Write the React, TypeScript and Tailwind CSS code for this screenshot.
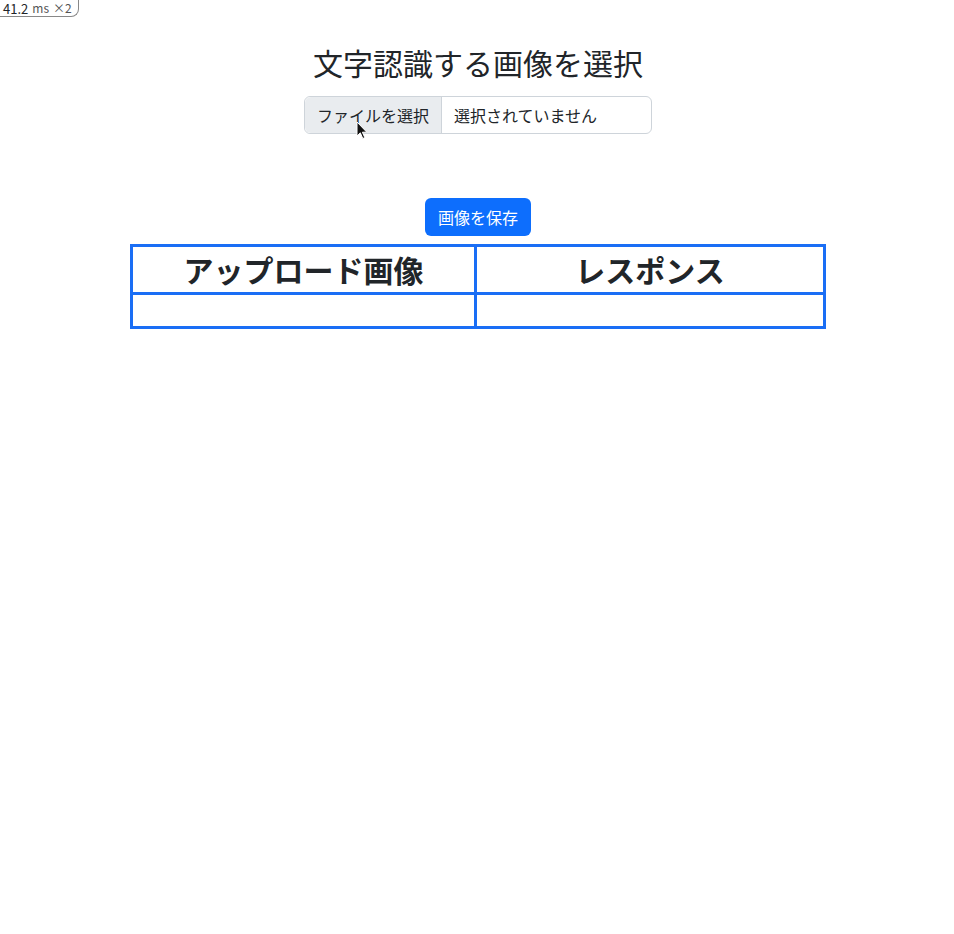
import React from 'react'

const font = { fontFamily: '"Noto Sans CJK JP", "Liberation Sans", sans-serif' }

export default function App() {
  return (
    <div className="relative min-h-[934px] bg-white text-[#212529]" style={font}>
      <div className="absolute left-0 top-0 flex h-[17px] items-center gap-1 rounded-br-[8px] border-b border-r border-[#888] bg-white pl-[3px] pr-[6px] text-[12px] leading-none">
        <span className="text-[13px]">41.2</span>
        <span className="text-[#555]">ms</span>
        <span className="text-[#555]">×2</span>
      </div>

      <div className="flex flex-col items-center pl-[2px] pt-[44px]">
        <h2 className="mb-[16px] text-[30px] leading-[36px] font-normal">文字認識する画像を選択</h2>

        <div className="relative flex h-[38px] w-[348px] rounded-[6px] border border-[#ced4da] text-[16px]">
          <span className="flex items-center rounded-l-[6px] border-r border-[#ced4da] bg-[#e9ecef] px-3">ファイルを選択</span>
          <span className="flex items-center px-3">選択されていません</span>
          <svg className="absolute left-[51px] top-[24px]" width="12" height="19" viewBox="0 0 12 19">
            <path d="M1 1 L1 15 L4.3 11.8 L6.8 17.5 L8.8 16.6 L6.4 11.2 L10.8 11.2 Z" fill="#111" stroke="#fff" strokeWidth="1" strokeLinejoin="round" />
          </svg>
        </div>

        <button className="mt-[64px] h-[38px] rounded-[6px] bg-[#0d6efd] px-[13px] text-[16px] text-white">
          画像を保存
        </button>

        <table className="mt-[8px] w-[696px] table-fixed border-collapse border-[3px] border-[#1a6ef5]">
          <thead>
            <tr>
              <th className="h-[48px] w-[344px] border-[3px] border-[#1a6ef5] pb-[2px] text-[30px] font-bold leading-[36px]">アップロード画像</th>
              <th className="h-[48px] border-[3px] border-[#1a6ef5] pb-[2px] text-[30px] font-bold leading-[36px]">レスポンス</th>
            </tr>
          </thead>
          <tbody>
            <tr>
              <td className="h-[34px] border-[3px] border-[#1a6ef5]"></td>
              <td className="h-[34px] border-[3px] border-[#1a6ef5]"></td>
            </tr>
          </tbody>
        </table>
      </div>
    </div>
  )
}
